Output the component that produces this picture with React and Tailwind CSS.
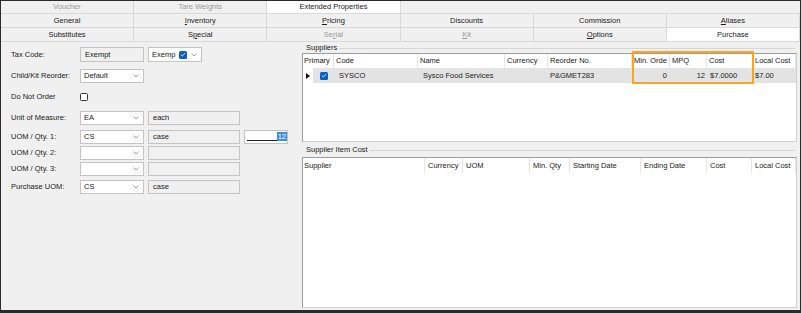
import React from 'react'

const tabRows = [
  [
    { label: 'Voucher', dis: true },
    { label: 'Tare Weights', dis: true },
    { label: 'Extended Properties', sel: true },
  ],
  [
    { label: 'General' },
    { label: 'Inventory', u: 0 },
    { label: 'Pricing', u: 0 },
    { label: 'Discounts' },
    { label: 'Commission' },
    { label: 'Aliases', u: 0 },
  ],
  [
    { label: 'Substitutes' },
    { label: 'Special', u: 1 },
    { label: 'Serial', dis: true, u: 2 },
    { label: 'Kit', dis: true, u: 0 },
    { label: 'Options', u: 0 },
    { label: 'Purchase', sel: true },
  ],
]

function Mnemonic({ label, u }) {
  if (u === undefined) return label
  return (
    <>
      {label.slice(0, u)}
      <u>{label[u]}</u>
      {label.slice(u + 1)}
    </>
  )
}

function Tab({ label, u, dis, sel }) {
  return (
    <div
      className={`flex items-center justify-center border-r border-b border-[#d9d9d9] ${
        sel ? 'bg-white' : 'bg-[#f0f0f0]'
      } ${dis ? 'text-[#9a9a9a]' : 'text-[#1a1a1a]'}`}
    >
      <Mnemonic label={label} u={u} />
    </div>
  )
}

function Chevron() {
  return (
    <svg width="6" height="4" viewBox="0 0 6 4" className="shrink-0">
      <path d="M0.5 0.5 L3 3 L5.5 0.5" fill="none" stroke="#8a8a8a" strokeWidth="0.8" />
    </svg>
  )
}

function CheckBox({ checked }) {
  if (checked) {
    return (
      <span className="flex w-[8px] h-[8px] rounded-[1.5px] bg-[#0a5fc4] items-center justify-center shrink-0">
        <svg width="6" height="5" viewBox="0 0 6 5">
          <path d="M0.8 2.6 L2.3 4 L5.2 0.9" fill="none" stroke="#ffffff" strokeWidth="0.8" />
        </svg>
      </span>
    )
  }
  return <span className="block w-[8px] h-[8px] rounded-[1.5px] border border-[#333] bg-white shrink-0" />
}

function Combo({ value, h = 'h-[14px]' }) {
  return (
    <div className={`w-[64px] ${h} flex items-center border border-[#c4c4c4] bg-white pl-[3px] pr-[4px]`}>
      <span className="flex-1">{value}</span>
      <Chevron />
    </div>
  )
}

function ReadBox({ value, w = 'w-[92px]', h = 'h-[14px]' }) {
  return (
    <div className={`${w} ${h} flex items-center border border-[#c4c4c4] bg-[#f0f0f0] pl-[4px]`}>
      {value}
    </div>
  )
}

function FormRow({ label, children, className = '' }) {
  return (
    <div className={`flex items-center ${className}`}>
      <div className="w-[79px] pl-[10px] shrink-0 whitespace-nowrap">{label}</div>
      <div className="flex items-center gap-[4px]">{children}</div>
    </div>
  )
}

function GroupLabel({ text, h }) {
  return (
    <div className={`flex items-center ${h}`}>
      <span className="pl-[4px] pr-[2px] text-[#1a1a1a]">{text}</span>
      <div className="flex-1 border-t border-[#d6d6d6] mr-[2px] mt-[1px]" />
    </div>
  )
}

const supplierCols = 'grid-cols-[31px_84px_87px_43px_84px_38px_37px_46px_1fr]'
const costCols = 'grid-cols-[122px_38px_67px_40px_71px_66px_45px_1fr]'

export default function App() {
  return (
    <div className="w-[801px] h-[313px] bg-white font-['Liberation_Sans',Arial,sans-serif] text-[7.5px] leading-none text-[#1a1a1a]">
      <div className="w-[801px] h-[313px] border-t border-x border-b-[3px] border-[#2b2b2b] flex flex-col bg-[#f0f0f0]">
        {/* Tabs */}
        <div className="grid grid-cols-6 h-[13px]">
          {tabRows[0].map((t) => (
            <Tab key={t.label} {...t} />
          ))}
          <div className="col-span-3 border-b border-[#d9d9d9] bg-[#f0f0f0]" />
        </div>
        <div className="grid grid-cols-6 h-[14px]">
          {tabRows[1].map((t) => (
            <Tab key={t.label} {...t} />
          ))}
        </div>
        <div className="grid grid-cols-6 h-[14px]">
          {tabRows[2].map((t) => (
            <Tab key={t.label} {...t} />
          ))}
        </div>

        {/* Body */}
        <div className="flex flex-1 min-h-0">
          {/* Left form */}
          <div className="w-[301px] shrink-0 flex flex-col pt-[5px]">
            <FormRow label="Tax Code:">
              <ReadBox value="Exempt" w="w-[64px]" h="h-[15px]" />
              <div className="w-[54px] h-[15px] flex items-center border border-[#c4c4c4] bg-white pl-[3px] pr-[4px]">
                <span className="flex-1">Exemp</span>
                <CheckBox checked />
                <span className="w-[4px]" />
                <Chevron />
              </div>
            </FormRow>
            <FormRow label="Child/Kit Reorder:" className="mt-[7px]">
              <Combo value="Default" />
            </FormRow>
            <FormRow label="Do Not Order" className="mt-[7px] h-[14px]">
              <CheckBox />
            </FormRow>
            <FormRow label="Unit of Measure:" className="mt-[7px]">
              <Combo value="EA" />
              <ReadBox value="each" />
            </FormRow>
            <FormRow label="UOM / Qty. 1:" className="mt-[5px]">
              <Combo value="CS" />
              <ReadBox value="case" />
              <div className="w-[44px] h-[14px] border border-[#c4c4c4] bg-white flex items-end pl-[2px] pb-[2px]">
                <div className="w-[31px] border-b border-[#222]" />
                <span className="bg-[#3b8fe6] text-white px-[1px] h-[9px] flex items-center">12</span>
              </div>
            </FormRow>
            <FormRow label="UOM / Qty. 2:" className="mt-[2px]">
              <Combo value="" />
              <ReadBox value="" />
            </FormRow>
            <FormRow label="UOM / Qty. 3:" className="mt-[2px]">
              <Combo value="" />
              <ReadBox value="" />
            </FormRow>
            <FormRow label="Purchase UOM:" className="mt-[4px]">
              <Combo value="CS" />
              <ReadBox value="case" />
            </FormRow>
          </div>

          {/* Right panel */}
          <div className="flex-1 flex flex-col pr-[3px]">
            <GroupLabel text="Suppliers" h="h-[11px]" />
            <div className="relative h-[89px] bg-white border-t border-l border-[#9c9c9c] border-r border-r-[#d0d0d0] border-b border-b-[#d0d0d0]">
              <div className={`grid ${supplierCols} h-[14px] items-center`}>
                {['Primary', 'Code', 'Name', 'Currency', 'Reorder No.', 'Min. Orde', 'MPQ', 'Cost', 'Local Cost'].map(
                  (c, i) => (
                    <div
                      key={c}
                      className={`h-full flex items-center border-r border-[#e6e6e6] overflow-hidden whitespace-nowrap ${
                        i === 0 ? 'pl-[1px]' : 'pl-[2px]'
                      }`}
                    >
                      {c}
                    </div>
                  )
                )}
              </div>
              <div className={`grid ${supplierCols} h-[15px] items-center`}>
                <div className="h-full flex">
                  <div className="w-[10px] bg-white flex items-center justify-center">
                    <svg width="4" height="6" viewBox="0 0 4 6">
                      <path d="M0 0 L4 3 L0 6 Z" fill="#111" />
                    </svg>
                  </div>
                  <div className="flex-1 bg-[#e3e3e3] flex items-center justify-center">
                    <CheckBox checked />
                  </div>
                </div>
                <div className="h-full bg-[#e3e3e3] flex items-center pl-[5px]">SYSCO</div>
                <div className="h-full bg-[#e3e3e3] flex items-center pl-[5px]">Sysco Food Services</div>
                <div className="h-full bg-[#e3e3e3]" />
                <div className="h-full bg-[#e3e3e3] flex items-center pl-[2px]">P&amp;GMET283</div>
                <div className="h-full bg-[#e3e3e3] flex items-center justify-end pr-[3px]">0</div>
                <div className="h-full bg-[#e3e3e3] flex items-center justify-end pr-[2px]">12</div>
                <div className="h-full bg-[#e3e3e3] flex items-center pl-[3px]">$7.0000</div>
                <div className="h-full bg-[#e3e3e3] flex items-center pl-[2px]">$7.00</div>
              </div>
              {/* highlight callout */}
              <div className="absolute left-[329px] top-[-3px] w-[122px] h-[33px] border-2 border-[#f5a623]" />
            </div>

            <GroupLabel text="Supplier Item Cost" h="h-[15px]" />
            <div className="h-[151px] bg-white border-t border-l border-[#9c9c9c] border-r border-r-[#d0d0d0] border-b border-b-[#d0d0d0]">
              <div className={`grid ${costCols} h-[15px] items-center`}>
                {['Supplier', 'Currency', 'UOM', 'Min. Qty', 'Starting Date', 'Ending Date', 'Cost', 'Local Cost'].map(
                  (c, i) => (
                    <div
                      key={c}
                      className={`h-full flex items-center border-r border-[#e6e6e6] whitespace-nowrap ${
                        i === 0 ? 'pl-[1px]' : 'pl-[3px]'
                      }`}
                    >
                      {c}
                    </div>
                  )
                )}
              </div>
            </div>
          </div>
        </div>
      </div>
    </div>
  )
}
